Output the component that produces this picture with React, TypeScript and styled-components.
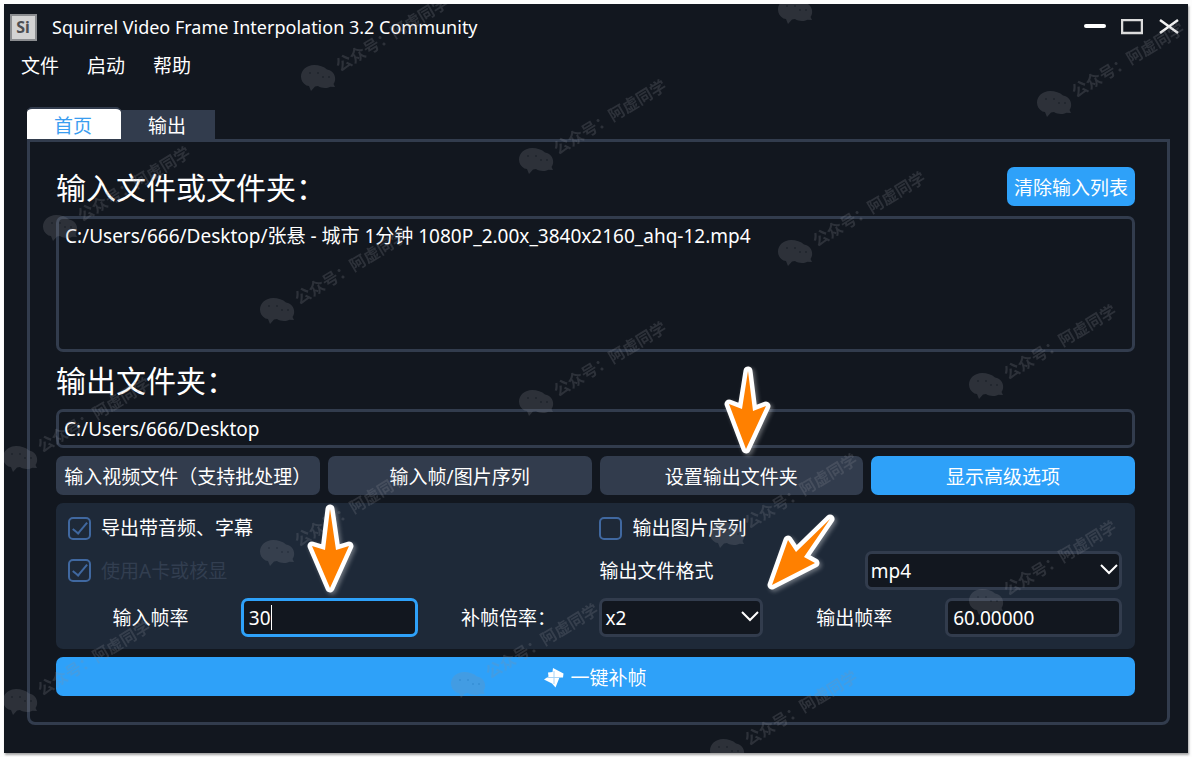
import React, { useState } from 'react';
import styled, { createGlobalStyle, css } from 'styled-components';

const color = {
  window: '#12171f',
  line: '#323c4d',
  panel: '#1e2938',
  accent: '#2ea1f9',
  text: '#ffffff',
  check: '#4068a0',
};

const GlobalStyle = createGlobalStyle`
  *, *::before, *::after { box-sizing: border-box; }
  body {
    margin: 0;
    background: #fdfdfd;
    color: ${color.text};
    font-family: "Noto Sans", "Noto Sans CJK SC", sans-serif;
    font-size: 19px;
    line-height: 26px;
  }
  button, input, select, textarea { font: inherit; color: inherit; margin: 0; }
`;

const Window = styled.div`
  position: relative;
  display: flex;
  flex-direction: column;
  min-height: calc(100vh - 8px);
  margin: 4px;
  padding: 0 18px 28px 23px;
  background: ${color.window};
  box-shadow: 1px 2px 2px rgba(0, 0, 0, 0.35);
  overflow: hidden;
`;

const TitleBar = styled.header`
  display: flex;
  align-items: center;
  height: 46px;
  margin: 0 -15px 0 -17px;
`;

const AppTitle = styled.h1`
  flex: 1;
  margin: 0 0 0 15px;
  font-size: 18px;
  font-weight: 400;
`;

const WindowControls = styled.div`
  display: flex;
  gap: 4px;
`;

const WindowButton = styled.button`
  display: grid;
  place-items: center;
  width: 33px;
  height: 32px;
  padding: 0;
  border: 0;
  background: none;
`;

const MenuBar = styled.nav`
  display: flex;
  gap: 28px;
  height: 57px;
  padding-top: 3px;
  margin-left: -6px;
`;

const MenuItem = styled.button`
  align-self: flex-start;
  padding: 0;
  border: 0;
  background: none;
`;

const TabList = styled.div`
  display: flex;
  align-items: flex-end;
`;

const Tab = styled.button<{ $active?: boolean }>`
  width: 94px;
  height: 29px;
  padding: 3px 2px 0 0;
  border: 0;
  background: ${color.line};
  ${(p) =>
    p.$active &&
    css`
      height: 32px;
      border-top: 2px solid ${color.line};
      border-radius: 5px 5px 0 0;
      background: #fff;
      color: #3a9df0;
    `}
`;

const TabPanel = styled.main`
  flex: 1;
  display: flex;
  flex-direction: column;
  gap: 8px;
  padding: 25px 32px 25px 26px;
  border: 3px solid ${color.line};
  border-radius: 0 0 8px 8px;
`;

const HeadingRow = styled.div`
  display: flex;
  align-items: flex-start;
  justify-content: space-between;
`;

const FieldHeading = styled.label`
  font-size: 30px;
  line-height: 41px;
`;

const fieldStyle = css`
  width: 100%;
  min-width: 0;
  border: 3px solid ${color.line};
  border-radius: 7px;
  background: ${color.window};
  outline: none;
`;

const FileList = styled.textarea`
  ${fieldStyle}
  display: block;
  height: 136px;
  padding: 4px 6px;
  resize: none;
`;

const TextField = styled.input<{ $active?: boolean }>`
  ${fieldStyle}
  height: 39px;
  padding: 0 5px;
  ${(p) => p.$active && css`border-color: ${color.accent};`}
`;

const Button = styled.button<{ $primary?: boolean }>`
  display: flex;
  align-items: center;
  justify-content: center;
  gap: 6px;
  height: 39px;
  padding: 2px 7px 0;
  border: 0;
  border-radius: 7px;
  background: ${(p) => (p.$primary ? color.accent : color.line)};
  white-space: nowrap;
`;

const ButtonRow = styled.div`
  display: grid;
  grid-template-columns: repeat(4, minmax(0, 1fr));
  gap: 8px;
`;

const Options = styled.section`
  display: grid;
  grid-template-columns: 165fr 177fr 166fr 164fr 166fr 177fr;
  align-items: center;
  gap: 8px;
  padding: 10px 13px 12px 12px;
  border-radius: 7px;
  background: ${color.panel};
`;

const HalfRow = styled.div`
  grid-column: span 3;
  display: grid;
  grid-template-columns: 1fr 1fr;
  align-items: center;
  gap: 8px;
`;

const CheckLabel = styled.label<{ $faded?: boolean }>`
  grid-column: span 3;
  display: flex;
  align-items: center;
  gap: 10px;
  height: 30px;
  color: ${(p) => (p.$faded ? '#323e50' : color.text)};
`;

const CheckBox = styled.input`
  appearance: none;
  display: grid;
  place-items: center;
  width: 23px;
  height: 23px;
  border: 2px solid ${color.check};
  border-radius: 5px;
  &:checked::after {
    content: '';
    width: 8px;
    height: 15px;
    margin-top: -4px;
    border: solid ${color.check};
    border-width: 0 2px 2px 0;
    transform: rotate(40deg);
  }
`;

const CenteredLabel = styled.label`
  text-align: center;
`;

const FieldWrap = styled.div`
  position: relative;
`;

const Caret = styled.span`
  position: absolute;
  left: 30px;
  top: 7px;
  width: 1px;
  height: 25px;
  background: #fff;
`;

const SelectField = styled.select`
  ${fieldStyle}
  display: block;
  appearance: none;
  height: 39px;
  padding: 0 28px 0 3px;
`;

const SelectChevron = styled.svg`
  position: absolute;
  right: 4px;
  top: 13px;
  pointer-events: none;
`;

const Overlay = styled.div`
  position: absolute;
  inset: 0;
  overflow: hidden;
  pointer-events: none;
`;

const WatermarkMark = styled.div<{ $x: number; $y: number }>`
  position: absolute;
  left: ${(p) => p.$x}px;
  top: ${(p) => p.$y}px;
  display: flex;
  opacity: 0.22;
  color: #8c8f98;
`;

const WatermarkText = styled.span`
  margin-left: 4px;
  margin-top: -12px;
  font-size: 16px;
  font-weight: 700;
  white-space: nowrap;
  transform: rotate(-31deg);
  transform-origin: 0 50%;
`;

const Arrow = styled.svg<{ $x: number; $y: number }>`
  position: absolute;
  left: ${(p) => p.$x}px;
  top: ${(p) => p.$y}px;
  overflow: visible;
  filter: drop-shadow(2px 2px 2px rgba(255, 255, 255, 0.35));
`;

const watermarks = [
  [301, 65], [778, -2], [1037, 91], [519, 148], [43, 215], [778, 240],
  [260, 298], [969, 373], [519, 390], [3, 446], [260, 540], [710, 522],
  [969, 589], [451, 672], [3, 689], [710, 739],
];

const arrows = [
  { x: 721, y: 362, points: '27,9 32,49 45,44 25,87 8,42 21,47' },
  { x: 304, y: 500, points: '26,9 32,50 45,46 26,88 8,46 21,50' },
  { x: 762, y: 510, points: '68,9 42,47 53,53 10,75 26,30 34,42' },
];

function Watermark({ x, y }: { x: number; y: number }) {
  return (
    <WatermarkMark $x={x - 4} $y={y - 4}>
      <svg width="35" height="26" viewBox="0 0 35 26" fill="currentColor">
        <path d="M13 0C6 0 0 5 0 11.5c0 4 2 7 5.5 9L8 21l2 5 4-4.5 3-.5c4 2.5 9 2.5 12.5.7L34 22l-1.500-3C36 14 34 6 26 4.500 23 1.500 18 0 13 0Z" />
        <g fill={color.window} opacity="0.5">
          <circle cx="9" cy="8" r="1" />
          <circle cx="17" cy="8" r="1" />
          <circle cx="22" cy="12" r="1" />
          <circle cx="28" cy="12" r="1" />
        </g>
      </svg>
      <WatermarkText>公众号：阿虚同学</WatermarkText>
    </WatermarkMark>
  );
}

function Select({ id, value }: { id: string; value: string }) {
  return (
    <FieldWrap>
      <SelectField id={id} defaultValue={value}>
        <option value={value}>{value}</option>
      </SelectField>
      <SelectChevron width="18" height="12" viewBox="0 0 18 12" fill="none" stroke="#fff" strokeWidth="2">
        <path d="m1 1 8 8 8-8" />
      </SelectChevron>
    </FieldWrap>
  );
}

export default function App() {
  const [tab, setTab] = useState(0);
  return (
    <>
      <GlobalStyle />
      <Window>
        <TitleBar>
          <svg width="27" height="27" viewBox="0 0 27 27" aria-hidden="true">
            <rect x="1" y="1" width="25" height="25" fill="#d3d3d3" stroke="#8b8d90" strokeWidth="2" />
            <text x="13" y="19" textAnchor="middle" fontSize="16" fontWeight="700" fill="#4d4f52">Si</text>
          </svg>
          <AppTitle>Squirrel Video Frame Interpolation 3.2 Community</AppTitle>
          <WindowControls>
            <WindowButton aria-label="最小化">
              <svg width="22" height="16" viewBox="0 0 22 16"><path d="M2 7h18" stroke="#fff" strokeWidth="4" strokeLinecap="round" /></svg>
            </WindowButton>
            <WindowButton aria-label="最大化">
              <svg width="22" height="16" viewBox="0 0 22 16"><rect x="1" y="1" width="20" height="13" fill="none" stroke="#dcdcdc" strokeWidth="2.5" /></svg>
            </WindowButton>
            <WindowButton aria-label="关闭">
              <svg width="22" height="16" viewBox="0 0 22 16"><path d="m2 1 18 13M20 1 2 14" stroke="#f2f2f2" strokeWidth="2.5" /></svg>
            </WindowButton>
          </WindowControls>
        </TitleBar>
        <MenuBar>
          <MenuItem>文件</MenuItem>
          <MenuItem>启动</MenuItem>
          <MenuItem>帮助</MenuItem>
        </MenuBar>
        <TabList role="tablist">
          {['首页', '输出'].map((name, i) => (
            <Tab key={name} role="tab" aria-selected={tab === i} $active={tab === i} onClick={() => setTab(i)}>
              {name}
            </Tab>
          ))}
        </TabList>
        <TabPanel>
          <HeadingRow>
            <FieldHeading htmlFor="files">输入文件或文件夹：</FieldHeading>
            <Button $primary>清除输入列表</Button>
          </HeadingRow>
          <FileList id="files" defaultValue="C:/Users/666/Desktop/张悬 - 城市 1分钟 1080P_2.00x_3840x2160_ahq-12.mp4" />
          <FieldHeading htmlFor="folder">输出文件夹：</FieldHeading>
          <TextField id="folder" defaultValue="C:/Users/666/Desktop" />
          <ButtonRow>
            <Button>输入视频文件（支持批处理）</Button>
            <Button>输入帧/图片序列</Button>
            <Button>设置输出文件夹</Button>
            <Button $primary>显示高级选项</Button>
          </ButtonRow>
          <Options>
            <CheckLabel>
              <CheckBox type="checkbox" defaultChecked />
              导出带音频、字幕
            </CheckLabel>
            <CheckLabel>
              <CheckBox type="checkbox" />
              输出图片序列
            </CheckLabel>
            <CheckLabel $faded>
              <CheckBox type="checkbox" defaultChecked disabled />
              使用A卡或核显
            </CheckLabel>
            <HalfRow>
              <label htmlFor="format">输出文件格式</label>
              <Select id="format" value="mp4" />
            </HalfRow>
            <CenteredLabel htmlFor="fps-in">输入帧率</CenteredLabel>
            <FieldWrap>
              <TextField id="fps-in" $active defaultValue="30" />
              <Caret />
            </FieldWrap>
            <CenteredLabel htmlFor="rate">补帧倍率：</CenteredLabel>
            <Select id="rate" value="x2" />
            <CenteredLabel htmlFor="fps-out">输出帧率</CenteredLabel>
            <TextField id="fps-out" defaultValue="60.00000" />
          </Options>
          <Button $primary>
            <svg width="20" height="20" viewBox="0 0 20 20" aria-hidden="true">
              <path d="M9 0 19.5 5.500 19 9.500h-3.500L11.500 19.500 8 15.500 0 11.500 4.500 8.500 4 4.500 8.500 4Z" fill="#fff" />
              <path d="M10 3v13M3 9.500h14" stroke="#a5d3f8" strokeWidth="1" />
            </svg>
            一键补帧
          </Button>
        </TabPanel>
        <Overlay aria-hidden="true">
          {watermarks.map(([x, y]) => (
            <Watermark key={`${x}-${y}`} x={x} y={y} />
          ))}
          {arrows.map((a) => (
            <Arrow key={a.x} $x={a.x - 4} $y={a.y - 4} width="80" height="95">
              <polygon points={a.points} fill="none" stroke="#fff" strokeWidth="9" strokeLinejoin="round" />
              <polygon points={a.points} fill="#ff8000" />
            </Arrow>
          ))}
        </Overlay>
      </Window>
    </>
  );
}
